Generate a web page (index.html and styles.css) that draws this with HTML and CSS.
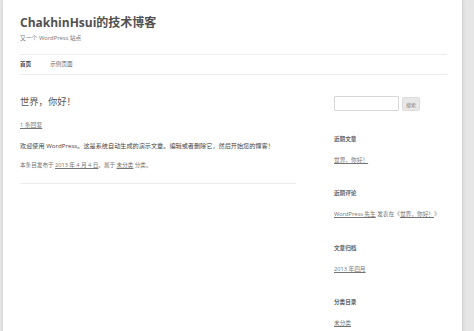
FILE: index.html
```html
<!DOCTYPE html>
<html lang="zh-CN">
  <head>
    <meta charset="UTF-8" />
    <meta name="viewport" content="width=device-width, initial-scale=1.0" />
    <title>ChakhinHsui的技术博客</title>
    <link rel="stylesheet" href="styles.css">
  </head>
  <body>
    <div class="site">
      <header class="site-header">
        <h1 class="site-title">ChakhinHsui的技术博客</h1>
        <p class="site-description">又一个 WordPress 站点</p>
        <nav class="main-nav">
          <a class="current" href="#">首页</a>
          <a href="#">示例页面</a>
        </nav>
      </header>

      <div class="main">
        <section class="content">
          <article class="post">
            <h2 class="entry-title">世界，你好！</h2>
            <p class="comments-link"><a href="#">1 条回复</a></p>
            <p class="entry-content">欢迎使用 WordPress。这是系统自动生成的演示文章。编辑或者删除它，然后开始您的博客！</p>
            <p class="entry-meta">本条目发布于 <a href="#">2013 年 4 月 4 日</a>。属于 <a href="#">未分类</a> 分类。</p>
          </article>
        </section>

        <aside class="sidebar">
          <form class="search">
            <input type="text" />
            <button type="button">搜索</button>
          </form>

          <div class="widget">
            <h3>近期文章</h3>
            <ul><li><a href="#">世界，你好！</a></li></ul>
          </div>
          <div class="widget">
            <h3>近期评论</h3>
            <ul><li><a href="#">WordPress 先生</a> 发表在《<a href="#">世界，你好！</a>》</li></ul>
          </div>
          <div class="widget">
            <h3>文章归档</h3>
            <ul><li><a href="#">2013 年四月</a></li></ul>
          </div>
          <div class="widget">
            <h3>分类目录</h3>
            <ul><li><a href="#">未分类</a></li></ul>
          </div>
        </aside>
      </div>
    </div>
  </body>
</html>
```

FILE: styles.css
```css
* {
  margin: 0;
  padding: 0;
  box-sizing: border-box;
}

body {
  background: #e6e6e6;
  font-family: "Open Sans", "Noto Sans CJK SC", sans-serif;
  color: #444;
}

a {
  color: #757575;
}

.site {
  width: 460px;
  min-height: 100vh;
  margin-left: 3px;
  padding: 16px 15px 0 17px;
  background: #fff;
  border-right: 1px solid #d6d6d6;
  box-shadow: 0 1px 3px rgba(0, 0, 0, 0.12);
}

.site-title {
  font-size: 12px;
  line-height: 14px;
  font-weight: 700;
  color: #515151;
}

.site-description {
  margin-top: 4px;
  font-size: 5.8px;
  line-height: 8px;
  color: #757575;
}

.main-nav {
  display: flex;
  gap: 19px;
  margin-top: 12px;
  border-top: 1px solid #ededed;
  border-bottom: 1px solid #ededed;
  font-size: 5.6px;
  line-height: 19px;
}

.main-nav a {
  color: #6a6a6a;
  text-decoration: none;
}

.main-nav a.current {
  color: #444;
  font-weight: 700;
}

.main {
  display: flex;
  justify-content: space-between;
  padding-top: 21px;
}

.content {
  width: 276px;
}

.post {
  padding-bottom: 13px;
  border-bottom: 1px solid #ededed;
}

.entry-title {
  font-size: 9.3px;
  line-height: 12px;
  font-weight: 400;
  color: #555;
}

.comments-link {
  margin-top: 11.5px;
  font-size: 5.8px;
  line-height: 10px;
}

.entry-content {
  margin-top: 10px;
  font-size: 6.15px;
  line-height: 11px;
}

.entry-meta {
  margin-top: 9.5px;
  font-size: 5.6px;
  line-height: 10px;
  color: #757575;
}

.sidebar {
  width: 113px;
}

.search {
  display: flex;
  gap: 3px;
  margin-bottom: 23px;
}

.search input {
  width: 65px;
  height: 15px;
  border: 1px solid #d8d8d8;
  border-radius: 1px;
  background: #fff;
}

.search button {
  width: 18px;
  height: 14px;
  margin-top: 1px;
  border: 1px solid #dcdcdc;
  border-radius: 1.5px;
  background: #e8e8e8;
  color: #7a7a7a;
  font-family: "Open Sans", "Noto Sans CJK SC", sans-serif;
  font-size: 5px;
}

.widget {
  margin-bottom: 23.3px;
  font-size: 5.7px;
  line-height: 10px;
}

.widget:last-child {
  margin-bottom: 0;
}

.widget h3 {
  margin-bottom: 11px;
  font-size: 5.6px;
  font-weight: 700;
  color: #636363;
}

.widget ul {
  list-style: none;
  color: #757575;
}
```
